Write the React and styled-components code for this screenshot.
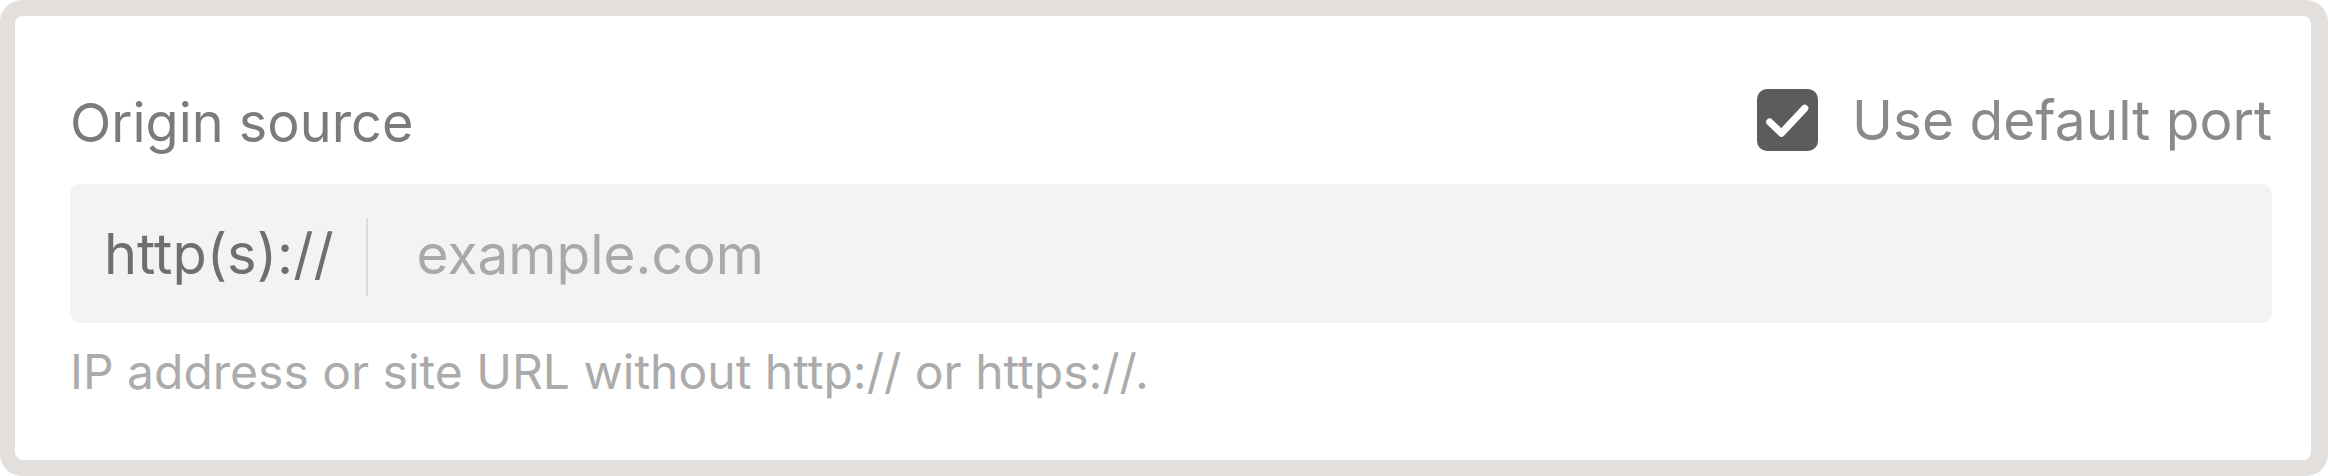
import React from "react";
import styled, { createGlobalStyle } from "styled-components";

const GlobalStyle = createGlobalStyle`
  html, body {
    margin: 0;
    padding: 0;
    background: #ffffff;
  }
  body {
    font-family: Inter, "Noto Sans", sans-serif;
  }
`;

function CheckIcon() {
  return (
    <svg width="61" height="62" viewBox="0 0 24 24" fill="none">
      <path
        d="M5 12.8l4.6 4.4L18.8 7.4"
        stroke="#ffffff"
        strokeWidth="2.8"
        strokeLinecap="round"
        strokeLinejoin="round"
      />
    </svg>
  );
}

export default function App() {
  return (
    <>
      <GlobalStyle />
      <Frame>
        <Card>
          <Header>
            <Label>Origin source</Label>
            <CheckRow>
              <Box>
                <CheckIcon />
              </Box>
              <CheckLabel>Use default port</CheckLabel>
            </CheckRow>
          </Header>
          <InputShell>
            <Prefix>http(s)://</Prefix>
            <Divider />
            <Field placeholder="example.com" />
          </InputShell>
          <Hint>IP address or site URL without http:// or https://.</Hint>
        </Card>
      </Frame>
    </>
  );
}

const Frame = styled.div`
  box-sizing: border-box;
  width: 2328px;
  height: 476px;
  padding: 16px 17px 16px 15px;
  background: #e3dfdd;
  border-radius: 22px;
`;

const Card = styled.div`
  box-sizing: border-box;
  height: 100%;
  background: #ffffff;
  border-radius: 8px;
  padding: 73px 39px 0 55px;
  display: flex;
  flex-direction: column;
`;

const Header = styled.div`
  display: flex;
  align-items: center;
  justify-content: space-between;
  height: 62px;
  margin-bottom: 33px;
`;

const Label = styled.div`
  font-size: 54px;
  line-height: 1;
  margin-top: 6px;
  color: #7b7b7b;
`;

const CheckRow = styled.label`
  display: flex;
  align-items: center;
  gap: 34px;
`;

const Box = styled.span`
  width: 61px;
  height: 62px;
  border-radius: 10px;
  background: #5c5c5c;
  display: flex;
`;

const CheckLabel = styled.span`
  font-size: 55px;
  line-height: 1;
  color: #8a8a8a;
`;

const InputShell = styled.div`
  box-sizing: border-box;
  height: 139px;
  background: #f3f3f3;
  border-radius: 10px;
  display: flex;
  align-items: center;
  padding-left: 34px;
`;

const Prefix = styled.span`
  font-size: 56px;
  line-height: 1;
  color: #6f6f6f;
`;

const Divider = styled.span`
  width: 2px;
  height: 78px;
  background: #dcdcdc;
  margin: 6px 33px 0 32px;
`;

const Field = styled.input`
  flex: 1;
  border: none;
  outline: none;
  background: transparent;
  font-family: Inter, "Noto Sans", sans-serif;
  font-size: 55px;
  padding: 0 0 0 16px;
  color: #555;
  &::placeholder {
    color: #a9a9a9;
  }
`;

const Hint = styled.div`
  margin-top: 25px;
  font-size: 48px;
  line-height: 1;
  color: #ababab;
`;
